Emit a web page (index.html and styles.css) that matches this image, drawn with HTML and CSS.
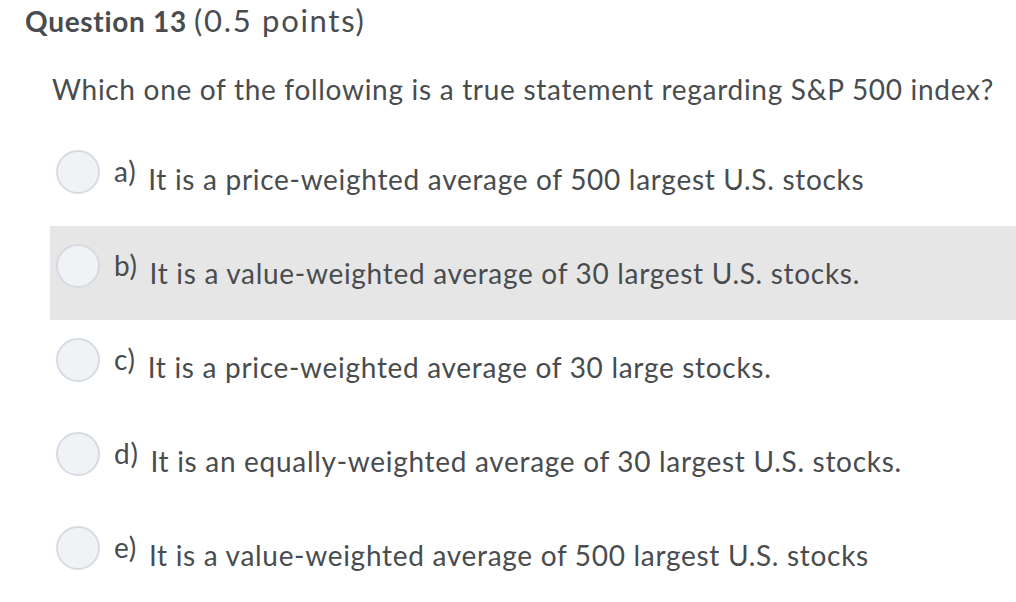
FILE: index.html
```html
<!DOCTYPE html>
<html lang="en">
<head>
<meta charset="utf-8">
<title>Question 13</title>
<link rel="stylesheet" href="styles.css">
</head>
<body>
<div class="quiz">
  <h2 class="title"><span class="qnum">Question 13</span> <span class="points">(0.5 points)</span></h2>
  <p class="question">Which one of the following is a true statement regarding S&amp;P 500 index?</p>
  <div class="options">
    <label class="option">
      <span class="radio"></span>
      <span class="label"><span class="letter">a)</span> It is a price-weighted average of 500 largest U.S. stocks</span>
    </label>
    <label class="option hover">
      <span class="radio"></span>
      <span class="label"><span class="letter">b)</span> It is a value-weighted average of 30 largest U.S. stocks.</span>
    </label>
    <label class="option">
      <span class="radio"></span>
      <span class="label"><span class="letter">c)</span> It is a price-weighted average of 30 large stocks.</span>
    </label>
    <label class="option">
      <span class="radio"></span>
      <span class="label"><span class="letter">d)</span> It is an equally-weighted average of 30 largest U.S. stocks.</span>
    </label>
    <label class="option">
      <span class="radio"></span>
      <span class="label"><span class="letter">e)</span> It is a value-weighted average of 500 largest U.S. stocks</span>
    </label>
  </div>
</div>
</body>
</html>
```

FILE: styles.css
```css
html, body {
  margin: 0;
  padding: 0;
  background: #ffffff;
}

body {
  font-family: Lato, "Open Sans", sans-serif;
  color: #494c4e;
  overflow: hidden;
}

.quiz {
  width: 1016px;
  height: 602px;
}

.title {
  margin: 0;
  padding: 4px 0 0 25px;
  font-size: 28px;
  line-height: 32px;
  font-weight: 400;
  white-space: nowrap;
}

.qnum {
  font-weight: 700;
  letter-spacing: 0.7px;
}

.points {
  font-size: 31px;
  letter-spacing: 1.7px;
}

.question {
  margin: 35px 0 26px 0;
  padding-left: 52px;
  font-size: 28px;
  line-height: 34px;
  letter-spacing: 0.7px;
  white-space: nowrap;
}

.options {
  margin-left: 50px;
  display: flex;
  flex-direction: column;
}

.option {
  display: flex;
  align-items: flex-start;
  height: 94px;
  padding-left: 6px;
}

.option.hover {
  background: #e6e6e6;
}

.radio {
  flex: none;
  box-sizing: border-box;
  width: 44px;
  height: 44px;
  margin-top: 18px;
  border: 2px solid #d5dbe3;
  border-radius: 50%;
  background: #f1f2f4;
}

.label {
  margin-left: 14px;
  margin-top: 30px;
  font-size: 28px;
  line-height: 34px;
  letter-spacing: 0.7px;
  white-space: nowrap;
}

.letter {
  vertical-align: 8px;
  line-height: 0;
  margin-right: 4px;
}
```
